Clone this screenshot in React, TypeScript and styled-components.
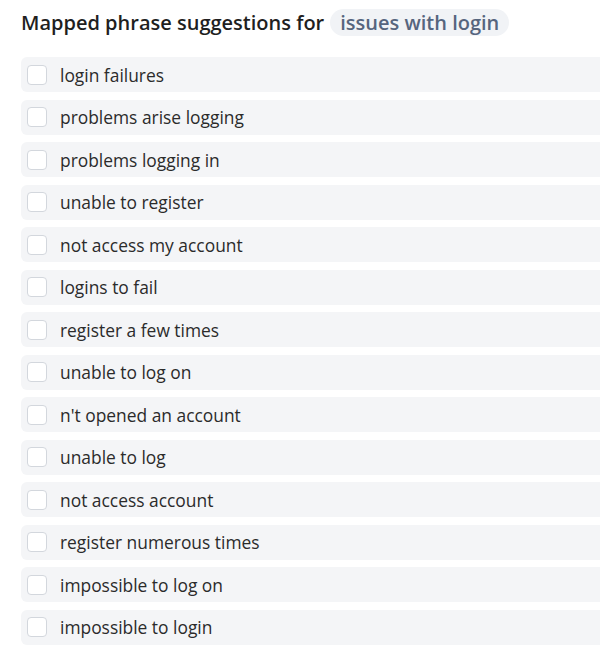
import React from "react";
import styled, { createGlobalStyle } from "styled-components";

const colours = {
    text: "#2b2b2b",
    row: "#f4f5f7",
    pill: "#f1f3f6",
    pillText: "#56657e",
    border: "#d3d7dd"
};

const GlobalStyle = createGlobalStyle`
  body {
    margin: 0;
    background: #fff;
    font-family: "Open Sans", "Liberation Sans", sans-serif;
    color: ${colours.text};
  }
`;

const Wrapper =
  styled.div`
  padding: 9px 0 0 21px;
  overflow: hidden;
  `;

const Heading =
  styled.h1`
  display: flex;
  align-items: center;
  gap: 6px;
  margin: 0 0 21px;
  font-size: 20px;
  font-weight: 600;
  line-height: 27px;
  color: #1f1f1f;
  white-space: nowrap;
  `;

const Pill =
  styled.span`
  background-color: ${colours.pill};
  color: ${colours.pillText};
  border-radius: 14px;
  padding: 0 10px;
  font-weight: 600;
  height: 27px;
  `;

const List =
  styled.ul`
  list-style: none;
  margin: 0;
  padding: 0;
  display: flex;
  flex-direction: column;
  gap: 7.5px;
  `;

const Row =
  styled.li`
  display: flex;
  align-items: center;
  gap: 13px;
  height: 35px;
  padding-left: 6px;
  background-color: ${colours.row};
  border-radius: 6px 0 0 6px;
  font-size: 17.4px;
  `;

const Checkbox =
  styled.span`
  width: 20px;
  height: 20px;
  box-sizing: border-box;
  border: 1px solid ${colours.border};
  border-radius: 4px;
  background: #fff;
  flex-shrink: 0;
  `;

const phrases = [
    "login failures",
    "problems arise logging",
    "problems logging in",
    "unable to register",
    "not access my account",
    "logins to fail",
    "register a few times",
    "unable to log on",
    "n't opened an account",
    "unable to log",
    "not access account",
    "register numerous times",
    "impossible to log on",
    "impossible to login"
];

const App = () => (
    <>
        <GlobalStyle />
        <Wrapper>
            <Heading>
                Mapped phrase suggestions for
                <Pill>issues with login</Pill>
            </Heading>
            <List>
                {phrases.map(phrase => (
                    <Row key={phrase}>
                        <Checkbox />
                        {phrase}
                    </Row>
                ))}
            </List>
        </Wrapper>
    </>
);

export default App;
